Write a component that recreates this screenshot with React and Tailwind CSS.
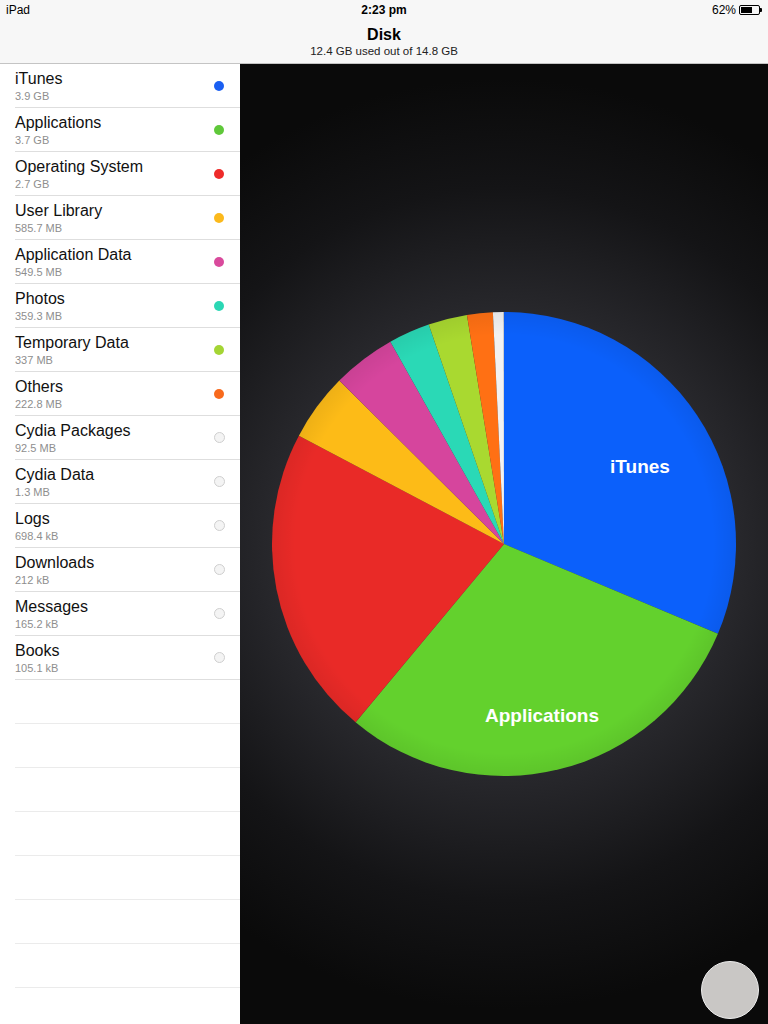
import React from "react";

const items = [
  { name: "iTunes", size: "3.9 GB", gb: 3.9, dot: "#1a5ff2", pie: "#0b60fb" },
  { name: "Applications", size: "3.7 GB", gb: 3.7, dot: "#5fc83a", pie: "#63d12d" },
  { name: "Operating System", size: "2.7 GB", gb: 2.7, dot: "#ee2b2a", pie: "#e92a27" },
  { name: "User Library", size: "585.7 MB", gb: 0.5857, dot: "#fbb91c", pie: "#fdbb17" },
  { name: "Application Data", size: "549.5 MB", gb: 0.5495, dot: "#d94a9c", pie: "#d6459d" },
  { name: "Photos", size: "359.3 MB", gb: 0.3593, dot: "#2bd7b4", pie: "#2ad9b6" },
  { name: "Temporary Data", size: "337 MB", gb: 0.337, dot: "#a4d534", pie: "#a9d930" },
  { name: "Others", size: "222.8 MB", gb: 0.2228, dot: "#f86a1d", pie: "#ff7014" },
  { name: "Cydia Packages", size: "92.5 MB", gb: 0.0925, dot: null, pie: "#f2f2f2" },
  { name: "Cydia Data", size: "1.3 MB", gb: 0.0013, dot: null, pie: "#f2f2f2" },
  { name: "Logs", size: "698.4 kB", gb: 0.0007, dot: null, pie: "#f2f2f2" },
  { name: "Downloads", size: "212 kB", gb: 0.0002, dot: null, pie: "#f2f2f2" },
  { name: "Messages", size: "165.2 kB", gb: 0.0002, dot: null, pie: "#f2f2f2" },
  { name: "Books", size: "105.1 kB", gb: 0.0001, dot: null, pie: "#f2f2f2" },
];

function Pie() {
  const cx = 232, cy = 232, r = 232;
  const total = items.reduce((s, i) => s + i.gb, 0);
  let acc = 0;
  const pt = (a) => [cx + r * Math.sin(a), cy - r * Math.cos(a)];
  const paths = items.map((it, idx) => {
    const a0 = (acc / total) * Math.PI * 2;
    acc += it.gb;
    const a1 = (acc / total) * Math.PI * 2;
    const [x0, y0] = pt(a0);
    const [x1, y1] = pt(a1);
    const large = a1 - a0 > Math.PI ? 1 : 0;
    return (
      <path
        key={idx}
        d={`M${cx},${cy} L${x0},${y0} A${r},${r} 0 ${large} 1 ${x1},${y1} Z`}
        fill={it.pie}
      />
    );
  });
  return (
    <svg width="464" height="464" viewBox="0 0 464 464">
      <defs>
        <radialGradient id="shade" cx="50%" cy="50%" r="50%">
          <stop offset="90%" stopColor="#000" stopOpacity="0" />
          <stop offset="100%" stopColor="#000" stopOpacity="0.06" />
        </radialGradient>
      </defs>
      {paths}
      <circle cx={cx} cy={cy} r={r} fill="url(#shade)" />
      <text x="368" y="161" fill="#fff" fontSize="19" fontWeight="600" textAnchor="middle" fontFamily="'Liberation Sans', Arial, sans-serif">iTunes</text>
      <text x="270" y="410" fill="#fff" fontSize="19" fontWeight="600" textAnchor="middle" fontFamily="'Liberation Sans', Arial, sans-serif">Applications</text>
    </svg>
  );
}

export default function App() {
  const empty = Array.from({ length: 8 });
  return (
    <div className="w-[768px] h-[1024px] overflow-hidden flex flex-col bg-white font-['Liberation_Sans',Arial,sans-serif] text-black">
      <div className="h-[64px] shrink-0 bg-[#f7f7f7] border-b border-[#c4c4c4] flex flex-col">
        <div className="h-[20px] flex items-center justify-between px-[6px] text-[12px]">
          <span className="w-[100px]">iPad</span>
          <span className="font-semibold text-[12px]">2:23 pm</span>
          <span className="w-[100px] flex items-center justify-end gap-[3px]">
            <span>62%</span>
            <span className="flex items-center">
              <span className="w-[21px] h-[10px] border border-black rounded-[2px] p-[1px] flex">
                <span className="w-[62%] h-full bg-black" />
              </span>
              <span className="w-[2px] h-[4px] bg-black rounded-r-[1px]" />
            </span>
          </span>
        </div>
        <div className="flex-1 flex flex-col items-center justify-center">
          <div className="text-[16px] font-semibold leading-[19px]">Disk</div>
          <div className="text-[11.5px] leading-[14px] text-[#222]">12.4 GB used out of 14.8 GB</div>
        </div>
      </div>
      <div className="flex flex-1 min-h-0">
        <div className="w-[240px] shrink-0 bg-white flex flex-col overflow-hidden">
          {items.map((it) => (
            <div key={it.name} className="h-[44px] shrink-0 ml-[15px] border-b border-[#dedede] flex items-center pr-[15px]">
              <div className="flex-1 flex flex-col pt-[1px]">
                <span className="text-[16px] leading-[19px] text-[#111]">{it.name}</span>
                <span className="text-[11px] leading-[13px] mt-[2px] text-[#8e8e8e]">{it.size}</span>
              </div>
              {it.dot ? (
                <span className="w-[10px] h-[10px] rounded-full mr-[1px]" style={{ backgroundColor: it.dot }} />
              ) : (
                <span className="w-[11px] h-[11px] rounded-full border border-[#cfcfcf] bg-[#f4f4f4]" />
              )}
            </div>
          ))}
          {empty.map((_, i) => (
            <div key={i} className="h-[44px] shrink-0 ml-[15px] border-b border-[#ebebeb]" />
          ))}
        </div>
        <div className="flex-1 relative bg-[radial-gradient(circle_at_50%_50%,#404045_0%,#2e2e33_35%,#141416_65%,#0a0a0a_85%)] flex items-center justify-center">
          <Pie />
          <div className="absolute right-[9px] bottom-[5px] w-[58px] h-[58px] rounded-full bg-[#c9c7c5] border border-[#eeeeee]" />
        </div>
      </div>
    </div>
  );
}
